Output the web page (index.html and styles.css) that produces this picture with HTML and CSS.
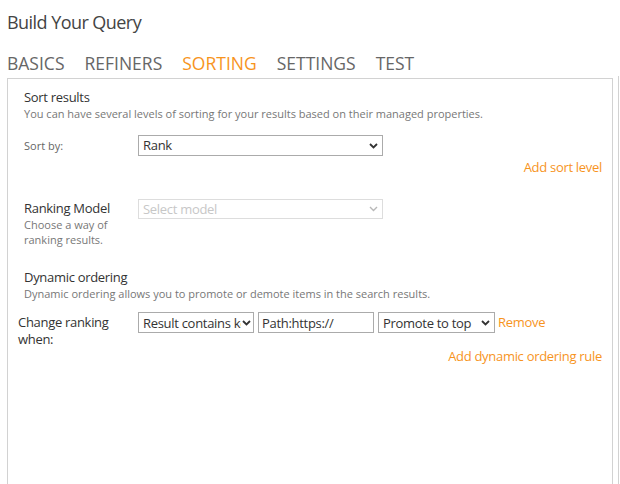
FILE: index.html
```html
<!DOCTYPE html>
<html>
<head>
<meta charset="utf-8">
<link rel="stylesheet" href="styles.css">
</head>
<body>
<h1 class="title">Build Your Query</h1>
<nav class="tabs">
  <span class="tab">BASICS</span>
  <span class="tab">REFINERS</span>
  <span class="tab active">SORTING</span>
  <span class="tab">SETTINGS</span>
  <span class="tab">TEST</span>
</nav>
<div class="frame">
  <div class="panel">
    <section class="sort">
      <h2 class="heading">Sort results</h2>
      <p class="desc">You can have several levels of sorting for your results based on their managed properties.</p>
      <div class="sort-row">
        <label class="field-label">Sort by:</label>
        <span class="sel sel-wide">
          <select class="control"><option>Rank</option></select>
          <svg class="chev" width="9" height="6" viewBox="0 0 9 6"><path d="M1 1l3.5 3.5L8 1" fill="none" stroke="currentColor" stroke-width="1.8"/></svg>
        </span>
      </div>
      <div class="action action-sort"><a class="link">Add sort level</a></div>
    </section>
    <section class="ranking">
      <div class="ranking-label">
        <h2 class="heading">Ranking Model</h2>
        <p class="desc">Choose a way of<br>ranking results.</p>
      </div>
      <span class="sel sel-wide disabled">
        <select class="control" disabled><option>Select model</option></select>
        <svg class="chev" width="9" height="6" viewBox="0 0 9 6"><path d="M1 1l3.5 3.5L8 1" fill="none" stroke="currentColor" stroke-width="1.4"/></svg>
      </span>
    </section>
    <section class="dynamic">
      <h2 class="heading">Dynamic ordering</h2>
      <p class="desc">Dynamic ordering allows you to promote or demote items in the search results.</p>
      <div class="rule-row">
        <label class="rule-label"><span class="line">Change ranking</span><span class="line">when:</span></label>
        <div class="rule-controls">
          <span class="sel sel-cond">
            <select class="control"><option>Result contains keyword</option></select>
            <svg class="chev chev-tight" width="9" height="6" viewBox="0 0 9 6"><path d="M1 1l3.5 3.5L8 1" fill="none" stroke="currentColor" stroke-width="1.8"/></svg>
          </span>
          <input class="control text-input" type="text" value="Path:https://">
          <span class="sel sel-action">
            <select class="control"><option>Promote to top</option></select>
            <svg class="chev" width="9" height="6" viewBox="0 0 9 6"><path d="M1 1l3.5 3.5L8 1" fill="none" stroke="currentColor" stroke-width="1.8"/></svg>
          </span>
          <a class="link remove">Remove</a>
        </div>
      </div>
      <div class="action action-rule"><a class="link">Add dynamic ordering rule</a></div>
    </section>
  </div>
  <div class="scroll-edge"></div>
</div>
</body>
</html>
```
FILE: styles.css
```css
html, body {
  margin: 0;
  padding: 0;
  background: #fff;
  height: 100%;
  overflow: hidden;
}
body {
  font-family: "Segoe UI", "Open Sans", sans-serif;
  color: #444;
}
.title {
  margin: 9px 0 0 7px;
  font-size: 18px;
  letter-spacing: -0.55px;
  line-height: 26px;
  font-weight: 400;
  color: #444;
}
.tabs {
  display: flex;
  margin: 16px 0 0 7px;
  font-size: 17.5px;
  line-height: 24px;
  color: #666;
}
.tab { margin-right: 20px; }
.tab.active { color: #f7941d; }
.frame {
  display: flex;
  margin-top: 3px;
  height: 420px;
}
.panel {
  margin-left: 7px;
  width: 606px;
  border: 1px solid #d2d2d2;
  border-bottom: none;
  padding: 10px 10px 0 16px;
  box-sizing: border-box;
}
.scroll-edge {
  margin-left: 5px;
  margin-top: -2px;
  width: 1px;
  background: #d2d2d2;
}
.heading {
  margin: 0;
  font-size: 13px;
  letter-spacing: -0.3px;
  line-height: 17px;
  font-weight: 400;
  color: #333;
}
.desc {
  margin: 0;
  font-size: 11px;
  line-height: 15px;
  color: #777;
}
.sort-row {
  display: flex;
  align-items: center;
  margin-top: 13.5px;
}
.field-label {
  width: 114px;
  font-size: 11px;
  line-height: 15px;
  color: #666;
}
.sel {
  position: relative;
  display: inline-flex;
}
.control {
  font-family: inherit;
  font-size: 13px;
  letter-spacing: -0.3px;
  color: #333;
  background: #fff;
  border: 1px solid #ababab;
  border-radius: 0;
  margin: 0;
  box-sizing: border-box;
  height: 21px;
  padding: 0 18px 0 4px;
  appearance: none;
  -webkit-appearance: none;
  outline: none;
}
.sel-wide .control { width: 245px; }
.chev {
  position: absolute;
  right: 5px;
  top: 8px;
  color: #333;
  pointer-events: none;
}
.chev-tight { right: 3px; }
.disabled .control {
  height: 20px;
  color: #b0b0b0;
  border-color: #d0d0d0;
}
.disabled .chev { color: #b8b8b8; top: 7px; }
.link {
  color: #f7941d;
  font-size: 13px;
  letter-spacing: -0.3px;
  line-height: 17px;
  cursor: pointer;
}
.action {
  display: flex;
  justify-content: flex-end;
  font-size: 13px;
  line-height: 17px;
}
.action-sort { margin-top: 3.5px; }
.ranking {
  display: flex;
  align-items: flex-start;
  margin-top: 23px;
}
.ranking-label {
  width: 114px;
  padding-top: 0.5px;
}
.dynamic { margin-top: 22px; }
.rule-row {
  display: flex;
  align-items: flex-start;
  margin-top: 11.5px;
  margin-left: -6px;
}
.rule-label {
  display: flex;
  flex-direction: column;
  width: 120px;
  margin-top: 1.5px;
  font-size: 13px;
  letter-spacing: -0.3px;
  line-height: 17px;
  color: #333;
}
.line { display: block; height: 17px; }
.rule-controls {
  display: flex;
  align-items: center;
  gap: 4px;
}
.sel-cond .control { width: 116px; padding-right: 12px; }
.text-input { width: 116px; padding: 0 3px; }
.sel-action .control { width: 117px; }
.remove { margin-left: -1px; }
.action-rule { margin-top: 0; }
```
